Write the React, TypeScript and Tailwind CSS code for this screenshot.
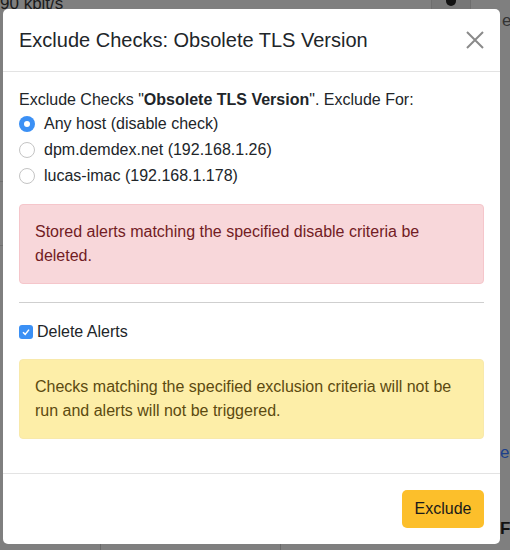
import React from "react";

const font = { fontFamily: '"Liberation Sans", Arial, sans-serif' };

function Radio(props: { checked?: boolean; label: string }) {
  return (
    <label className="flex h-[26px] items-center gap-[9px]">
      {props.checked ? (
        <span className="flex h-[16px] w-[16px] items-center justify-center rounded-full bg-[#3b90f5]">
          <span className="h-[6px] w-[6px] rounded-full bg-white" />
        </span>
      ) : (
        <span className="h-[16px] w-[16px] rounded-full border border-[#c4c4c4] bg-white" />
      )}
      <span>{props.label}</span>
    </label>
  );
}

export default function App() {
  return (
    <div className="relative h-[550px] w-[510px] overflow-hidden bg-[#7f7f7f]" style={font}>
      {/* dimmed page behind the modal */}
      <div className="absolute left-0 top-[-9px] text-[17px] text-[#1a1a1a]">90 kbit/s</div>
      <div className="absolute left-[431px] top-0 h-[23px] w-[40px] border-l border-r border-[#6e6e6e] bg-[#777]">
        <span className="absolute left-[14px] top-[-4px] h-[10px] w-[10px] rounded-full bg-[#111]" />
      </div>
      <div className="absolute left-[502px] top-[8px] text-[17px] text-[#333]">ea</div>
      <div className="absolute left-0 top-[181px] h-px w-[4px] bg-[#707070]" />
      <div className="absolute left-0 top-[245px] h-px w-[4px] bg-[#707070]" />
      <div className="absolute left-[500px] top-[440px] text-[17px] text-[#1c3f8a]">er</div>
      <div className="absolute left-[500px] top-[516px] text-[17px] font-bold text-[#111]">Fi</div>
      <div className="absolute left-[100px] top-[543px] h-[7px] w-px bg-[#6a6a6a]" />
      <div className="absolute left-[280px] top-[543px] h-[7px] w-px bg-[#6a6a6a]" />

      <div className="relative z-10 ml-[3px] mt-[9px] w-[497px] rounded-[5px] bg-white text-[16px] text-[#212529]">
        <div className="flex h-[63px] items-center justify-between border-b border-[#e3e3e3] px-4">
          <h2 className="text-[20px] leading-[30px] text-[#212529]">Exclude Checks: Obsolete TLS Version</h2>
          <svg width="20" height="20" viewBox="0 0 20 20" className="mr-[-1px]">
            <path d="M2 2 L18 18 M18 2 L2 18" stroke="#8a8a8a" strokeWidth="2" />
          </svg>
        </div>

        <div className="px-4 pb-[34px] pt-4">
          <p className="leading-[24px]">
            Exclude Checks "<b>Obsolete TLS Version</b>". Exclude For:
          </p>
          <div className="mt-[-1px] flex flex-col">
            <Radio checked label="Any host (disable check)" />
            <Radio label="dpm.demdex.net (192.168.1.26)" />
            <Radio label="lucas-imac (192.168.1.178)" />
          </div>

          <div className="mt-[15px] rounded-[4px] border border-[#f5c6cb] bg-[#f8d7da] p-[15px] leading-[24px] text-[#721c24]">
            Stored alerts matching the specified disable criteria be deleted.
          </div>

          <hr className="mt-[18px] border-t border-[#cfcfcf]" />

          <label className="mt-[17px] flex h-[24px] items-center gap-[4px]">
            <span className="flex h-[14px] w-[14px] items-center justify-center rounded-[3px] bg-[#3b90f5]">
              <svg width="10" height="10" viewBox="0 0 10 10">
                <path d="M2 5.2 L4.2 7.4 L8 2.6" fill="none" stroke="white" strokeWidth="1.5" />
              </svg>
            </span>
            <span>Delete Alerts</span>
          </label>

          <div className="mt-[15px] rounded-[4px] border border-[#f8e9ab] bg-[#fdeea8] p-[15px] leading-[24px] text-[#5c4a10]">
            Checks matching the specified exclusion criteria will not be run and alerts will not be triggered.
          </div>
        </div>

        <div className="flex justify-end border-t border-[#e3e3e3] p-4">
          <button className="h-[38px] w-[82px] rounded-[5px] bg-[#fcbf2b] text-[16px] text-[#1a1a1a]" type="button">
            Exclude
          </button>
        </div>
      </div>
    </div>
  );
}
